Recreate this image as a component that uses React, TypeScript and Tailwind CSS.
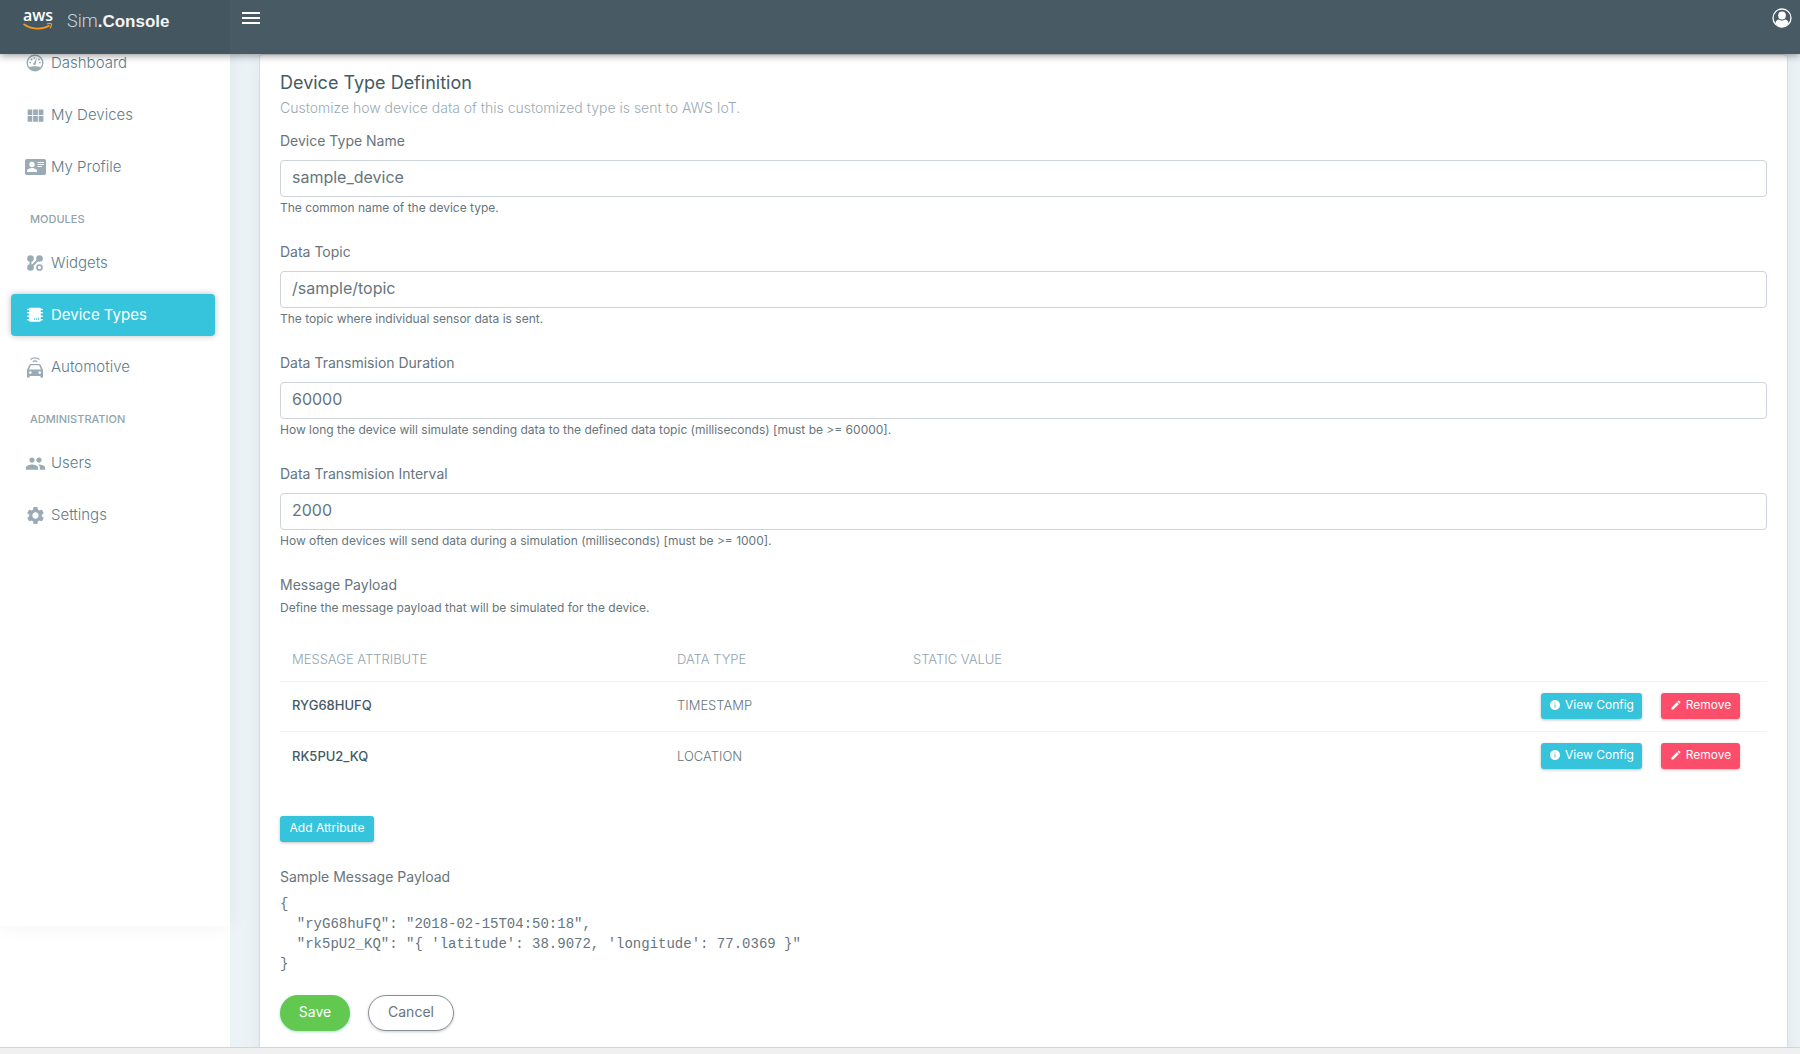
import type { ReactNode } from 'react'
import clsx from 'clsx'
import { MdInfo, MdMenu, MdModeEdit, MdPeople, MdSettings, MdViewModule } from 'react-icons/md'

type NavItemProps = {
  icon: ReactNode
  label: string
  current?: boolean
}

type FieldProps = {
  id: string
  label: string
  value: string
  help: string
}

function GaugeIcon() {
  return (
    <svg viewBox="0 0 18 18" className="size-[18px]" fill="currentColor">
      <path
        fillRule="evenodd"
        d="M9 .5a8.500 8.500 0 1 0 0 17 8.500 8.500 0 0 0 0-17Zm0 1.400a7.100 7.100 0 0 1 5.600 11.400c-1.600-.8-3.500-1.100-5.600-1.100s-4 .3-5.600 1.100A7.100 7.100 0 0 1 9 1.900Z"
      />
      <path d="M10.700 3.800 9.900 9.300a1.300 1.300 0 1 1-1.500-.9Z" />
      <circle cx="4.200" cy="8.600" r=".9" />
      <circle cx="5.500" cy="5.500" r=".9" />
      <circle cx="8.300" cy="4.100" r=".9" />
      <circle cx="12.900" cy="5.500" r=".9" />
      <circle cx="13.900" cy="8.600" r=".9" />
    </svg>
  )
}

function ProfileCardIcon() {
  return (
    <svg viewBox="0 0 21 16" className="h-4 w-[21px]" fill="currentColor">
      <rect width="21" height="16" rx="1.800" />
      <circle cx="7" cy="5.500" r="2.700" fill="#fff" />
      <path d="M2 13v-1c0-2 3.200-3 5-3s5 1 5 3v1Z" fill="#fff" />
      <path d="M12.500 3.500H19M12.500 5.500H19M12.500 7.500H17" stroke="#fff" strokeWidth=".9" />
    </svg>
  )
}

function WidgetsIcon() {
  return (
    <svg viewBox="0 0 16 16" className="size-4" fill="currentColor">
      <circle cx="3.500" cy="3.500" r="3.300" />
      <circle cx="12.500" cy="3.500" r="3.300" />
      <circle cx="3.500" cy="12.500" r="3.300" />
      <path d="M3.500 3.500v9l9-9" fill="none" stroke="currentColor" strokeWidth="1.900" />
      <circle cx="12.500" cy="12.500" r="2.500" fill="none" stroke="currentColor" strokeWidth="1.700" />
    </svg>
  )
}

function ChipIcon() {
  return (
    <svg viewBox="0 0 16 16" className="size-4" fill="currentColor">
      <rect x="2.300" y=".8" width="11.400" height="14" rx=".8" />
      <path
        d="M.8 2.500h14.400M.8 5.800h14.400M.8 9.300h14.400M.8 12.800h14.400"
        stroke="currentColor"
        strokeWidth="1.500"
        strokeLinecap="round"
      />
      <path d="M7.500 11v2M9.500 11v2M11.500 10.500v2.500" stroke="#36c4dc" strokeWidth=".7" />
    </svg>
  )
}

function ConnectedCarIcon() {
  return (
    <svg viewBox="0 0 16 21" className="h-[21px] w-4" fill="currentColor">
      <path
        d="M3.500 2.500C6 .3 10 .3 12.500 2.500M5.800 4.800c1.300-1 3.100-1 4.400 0"
        fill="none"
        stroke="currentColor"
        strokeWidth="1.300"
      />
      <path
        fillRule="evenodd"
        d="M3.600 7h8.800c.6 0 1.100.4 1.300.9L16 13v7c0 .5-.3.800-.8.800h-1c-.5 0-.8-.3-.8-.8v-1H2.600v1c0 .5-.3.800-.8.800h-1c-.5 0-.8-.3-.8-.8v-7l2.300-5.100c.2-.5.700-.9 1.300-.9Zm.2 1.300L2.100 12.500h11.800l-1.700-4.200ZM3.300 14.300a1.300 1.300 0 1 0 0 2.600 1.300 1.300 0 0 0 0-2.600Zm9.400 0a1.300 1.300 0 1 0 0 2.600 1.300 1.300 0 0 0 0-2.600Z"
      />
    </svg>
  )
}

function UserIcon() {
  return (
    <svg viewBox="0 0 20 20" className="size-5" fill="currentColor">
      <circle cx="10" cy="10" r="9" fill="none" stroke="currentColor" strokeWidth="1.300" />
      <circle cx="10" cy="7.500" r="3.900" />
      <path d="M3.500 15.500c0-3 2-4 3.500-4 1 .8 2 1 3 1s2-.2 3-1c1.500 0 3.500 1 3.500 4A9 9 0 0 1 10 19a9 9 0 0 1-6.500-3.500Z" />
    </svg>
  )
}

function Logo() {
  return (
    <a href="#" className="flex items-start pl-[23px]">
      <span className="flex w-[30px] flex-col items-center">
        <span className="font-['Open_Sans'] text-base leading-4 font-semibold text-white">aws</span>
        <svg viewBox="0 0 30 8" className="h-2 w-[30px]" fill="none" stroke="#f7981f">
          <path d="M.5 1c8 5.800 18.500 6 26 1.500" strokeWidth="1.600" />
          <path d="M24 .9c1.800-.6 3.500-.7 4.300-.1.500.8-.2 2.900-1.400 4.500" strokeWidth="1.200" />
        </svg>
      </span>
      <span className="pt-0.5 pl-[14px] text-lg leading-6 text-gray-100">
        <span className="font-[Roboto] font-light text-gray-300">Sim</span>
        <span className="font-['Liberation_Sans'] text-[17px] font-bold">.Console</span>
      </span>
    </a>
  )
}

function NavItem({ icon, label, current }: NavItemProps) {
  return (
    <a
      href="#"
      className={clsx(
        'flex h-[42px] items-center gap-1 rounded-sm pl-3 text-[15px]',
        current ? 'bg-[#36c4dc] text-white shadow-[0_0_6px_rgba(0,0,0,0.25)]' : 'font-light text-[#607d8b]'
      )}
    >
      <span className={clsx('flex w-6 justify-center', current ? 'text-white' : 'text-[#99abb4]')}>{icon}</span>
      {label}
    </a>
  )
}

function NavHeading({ children }: { children: ReactNode }) {
  return (
    <h2 className="flex h-[34px] items-center pt-2 pl-[19px] text-[11px] font-medium text-[#90a4ae]">{children}</h2>
  )
}

function Field({ id, label, value, help }: FieldProps) {
  return (
    <div className="mb-6">
      <label htmlFor={id} className="block text-sm leading-[21px]">
        {label}
      </label>
      <input
        id={id}
        defaultValue={value}
        className="mt-[9px] block h-[37px] w-full rounded-sm border border-[#ced4da] bg-white px-[11px] pb-1 text-base"
      />
      <small className="mt-0.5 block text-xs leading-[18px]">{help}</small>
    </div>
  )
}

const fields: FieldProps[] = [
  { id: 'name', label: 'Device Type Name', value: 'sample_device', help: 'The common name of the device type.' },
  { id: 'topic', label: 'Data Topic', value: '/sample/topic', help: 'The topic where individual sensor data is sent.' },
  {
    id: 'duration',
    label: 'Data Transmision Duration',
    value: '60000',
    help: 'How long the device will simulate sending data to the defined data topic (milliseconds) [must be >= 60000].',
  },
  {
    id: 'interval',
    label: 'Data Transmision Interval',
    value: '2000',
    help: 'How often devices will send data during a simulation (milliseconds) [must be >= 1000].',
  },
]

const attributes = [
  { name: 'RYG68HUFQ', type: 'TIMESTAMP' },
  { name: 'RK5PU2_KQ', type: 'LOCATION' },
]

const samplePayload = `{
  "ryG68huFQ": "2018-02-15T04:50:18",
  "rk5pU2_KQ": "{ 'latitude': 38.9072, 'longitude': 77.0369 }"
}`

const smallButton =
  'flex h-[26px] items-center justify-center gap-1 rounded-[3px] pb-0.5 text-xs text-white shadow-[0_1px_3px_rgba(0,0,0,0.25)]'

export default function App() {
  return (
    <div className="flex h-screen flex-col overflow-hidden bg-[#ebf3f7] font-[Inter,sans-serif] text-[#67757c]">
      <header className="z-10 flex h-[54px] shrink-0 bg-[#485a63] shadow-[0_1px_8px_rgba(0,0,0,0.45)]">
        <div className="w-[230px] bg-[#44565f] pt-[7px]">
          <Logo />
        </div>
        <div className="flex grow items-start justify-between pt-2 pr-2 pl-[9px] text-white">
          <button aria-label="Toggle menu">
            <MdMenu className="-mt-0.5 size-6" />
          </button>
          <button aria-label="Account">
            <UserIcon />
          </button>
        </div>
      </header>

      <div className="flex min-h-0 grow">
        <aside className="w-[230px] shrink-0 bg-white">
          <nav className="-mt-3 flex h-[89%] flex-col gap-2.5 bg-white pr-[15px] pl-[11px] shadow-[1px_0_20px_rgba(0,0,0,0.05)]">
            <NavItem icon={<GaugeIcon />} label="Dashboard" />
            <NavItem icon={<MdViewModule className="size-[21px]" />} label="My Devices" />
            <NavItem icon={<ProfileCardIcon />} label="My Profile" />
            <NavHeading>MODULES</NavHeading>
            <NavItem icon={<WidgetsIcon />} label="Widgets" />
            <NavItem icon={<ChipIcon />} label="Device Types" current />
            <NavItem icon={<ConnectedCarIcon />} label="Automotive" />
            <NavHeading>ADMINISTRATION</NavHeading>
            <NavItem icon={<MdPeople className="size-[21px]" />} label="Users" />
            <NavItem icon={<MdSettings className="size-[21px]" />} label="Settings" />
          </nav>
        </aside>

        <main className="min-w-0 grow overflow-hidden pr-3 pl-[29px]">
          <form className="rounded-sm border border-[#d5dde0] bg-white px-5 pt-4 pb-8 shadow-[0_5px_20px_rgba(0,0,0,0.05)]">
            <h1 className="text-lg leading-6 text-[#455a64]">Device Type Definition</h1>
            <p className="mt-0.5 mb-3 text-sm leading-[21px] font-light text-[#99abb4]">
              Customize how device data of this customized type is sent to AWS IoT.
            </p>

            {fields.map((field) => (
              <Field key={field.id} {...field} />
            ))}

            <h2 className="text-sm leading-[21px]">Message Payload</h2>
            <p className="mt-1 text-xs leading-[18px]">
              Define the message payload that will be simulated for the device.
            </p>

            <table className="mt-5 w-full table-fixed text-left text-[13px]">
              <thead>
                <tr className="h-11 text-[#90a4ae]">
                  <th className="w-[385px] px-3 pt-0.5 font-light">MESSAGE ATTRIBUTE</th>
                  <th className="w-[236px] px-3 pt-0.5 font-light">DATA TYPE</th>
                  <th className="px-3 pt-0.5 font-light">STATIC VALUE</th>
                  <th className="w-[120px]" />
                  <th className="w-[118px]" />
                </tr>
              </thead>
              <tbody>
                {attributes.map((attribute) => (
                  <tr key={attribute.name} className="h-[50px] border-t border-[#f0f2f3]">
                    <td className="px-3 font-medium text-[#455a64]">{attribute.name}</td>
                    <td className="px-3 font-light">{attribute.type}</td>
                    <td />
                    <td className="pl-3">
                      <button type="button" className={clsx(smallButton, 'w-[101px] bg-[#36c4dc]')}>
                        <MdInfo className="size-3" />
                        View Config
                      </button>
                    </td>
                    <td className="pl-3">
                      <button type="button" className={clsx(smallButton, 'w-[79px] bg-[#fc4e6b]')}>
                        <MdModeEdit className="size-3" />
                        Remove
                      </button>
                    </td>
                  </tr>
                ))}
              </tbody>
            </table>

            <button type="button" className={clsx(smallButton, 'mt-[35px] w-[94px] bg-[#36c4dc]')}>
              Add Attribute
            </button>

            <h2 className="mt-6 text-sm leading-[21px]">Sample Message Payload</h2>
            <pre className="mt-[7px] font-['Liberation_Mono',monospace] text-sm leading-5">{samplePayload}</pre>

            <div className="mt-[21px] flex gap-[18px] text-sm">
              <button
                type="submit"
                className="h-9 w-[70px] rounded-full bg-[#62c84f] pb-0.5 text-white shadow-[0_1px_3px_rgba(0,160,160,0.35)]"
              >
                Save
              </button>
              <button
                type="button"
                className="h-9 w-[86px] rounded-full border border-[#868e96] bg-white pb-0.5 shadow-[0_1px_3px_rgba(0,0,0,0.2)]"
              >
                Cancel
              </button>
            </div>
          </form>
        </main>
      </div>

      <footer className="z-10 h-[7px] shrink-0 border-t border-[#d0d5d6] bg-[#f0f0f0]" />
    </div>
  )
}
